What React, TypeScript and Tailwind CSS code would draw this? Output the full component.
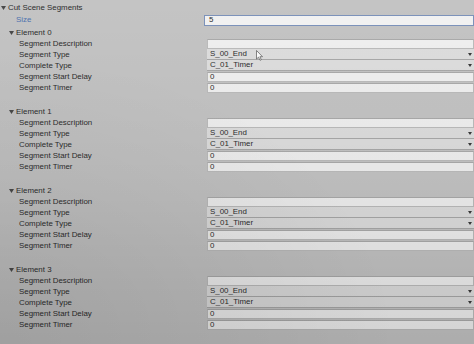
const elements = [0, 1, 2, 3];

function Caret({ className }: { className: string }) {
  return (
    <svg width="5" height="4" viewBox="0 0 5 4" className={className}>
      <path d="M0 0 L5 0 L2.5 4 Z" fill="#4a4a4a" />
    </svg>
  );
}

function TextField({ value }: { value?: string }) {
  return (
    <div className="flex h-[10px] flex-1 items-center border border-[#bcbcbc] border-t-[#ababab] bg-[#f0f0f0] pl-[2px] leading-none">
      {value}
    </div>
  );
}

function Dropdown({ value }: { value: string }) {
  return (
    <div className="flex h-[11px] flex-1 items-center justify-between border-b border-[#a9a9a9] bg-[#dedede] pl-[3px] pr-[2px] leading-none">
      <span>{value}</span>
      <svg width="4" height="3" viewBox="0 0 4 3">
        <path d="M0 0 L4 0 L2 3 Z" fill="#3a3a3a" />
      </svg>
    </div>
  );
}

function Row({ label, children }: { label: string; children: React.ReactNode }) {
  return (
    <div className="flex h-[11px] items-center">
      <div className="w-[207px] pl-[19px] leading-none">{label}</div>
      {children}
    </div>
  );
}

export default function App() {
  return (
    <div
      className="relative h-[344px] w-[474px] overflow-hidden bg-[#c4c4c4] pt-[2px] text-[7.9px] text-[#2e2e2e]"
      style={{ fontFamily: '"Liberation Sans", Arial, sans-serif' }}
    >
      <div className="flex h-[12px] items-center">
        <Caret className="ml-[1px] mr-[2px]" />
        <span className="leading-none">Cut Scene Segments</span>
      </div>
      <div className="flex h-[12px] items-center">
        <div className="w-[204px] pl-[16px] leading-none text-[#4f73b0]">Size</div>
        <div className="flex h-[11px] flex-1 items-center border border-[#7d93bb] bg-[#f2f2f2] pl-[4px] leading-none">
          5
        </div>
      </div>
      {elements.map((i) => (
        <div key={i} className="mt-[1px] mb-[13px]">
          <div className="flex h-[11px] items-center">
            <Caret className="ml-[9px] mr-[2px]" />
            <span className="leading-none">Element {i}</span>
          </div>
          <Row label="Segment Description">
            <TextField />
          </Row>
          <Row label="Segment Type">
            <Dropdown value="S_00_End" />
          </Row>
          <Row label="Complete Type">
            <Dropdown value="C_01_Timer" />
          </Row>
          <Row label="Segment Start Delay">
            <TextField value="0" />
          </Row>
          <Row label="Segment Timer">
            <TextField value="0" />
          </Row>
        </div>
      ))}

      {/* screen photo shading */}
      <div className="pointer-events-none absolute inset-0 bg-gradient-to-b from-transparent via-black/[0.04] to-black/[0.12]" />
      <div className="pointer-events-none absolute inset-0 bg-[radial-gradient(ellipse_at_0%_100%,rgba(0,0,0,0.08),transparent_60%)]" />

      {/* mouse cursor */}
      <svg className="absolute left-[256px] top-[50px]" width="7" height="11" viewBox="0 0 7 11">
        <path d="M0.5 0.5 L0.5 9 L2.5 7.2 L4 10.3 L5.3 9.7 L3.9 6.7 L6.5 6.7 Z" fill="#fafafa" stroke="#555" strokeWidth="0.7" />
      </svg>
    </div>
  );
}
